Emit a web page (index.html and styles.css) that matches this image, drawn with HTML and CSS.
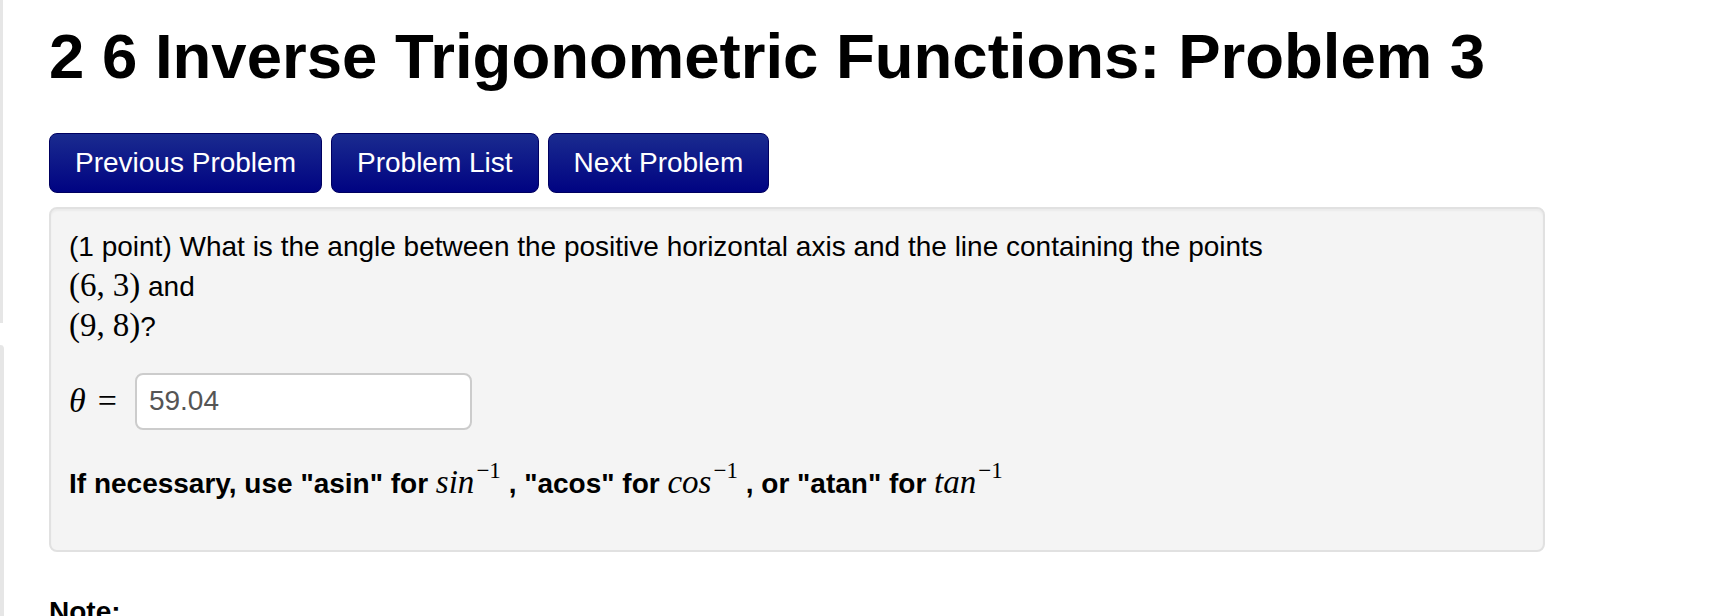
FILE: index.html
```html
<!DOCTYPE html>
<html lang="en">
<head>
  <meta charset="UTF-8">
  <title>2 6 Inverse Trigonometric Functions: Problem 3</title>
  <link rel="stylesheet" href="styles.css">
</head>
<body>

<div class="page">
  <aside class="edge">
    <div class="edge-top"></div>
    <div class="edge-bottom"></div>
  </aside>

  <main class="content">
    <h1>2 6 Inverse Trigonometric Functions: Problem 3</h1>

    <div class="nav-buttons">
      <a class="btn" href="#">Previous Problem</a>
      <a class="btn" href="#">Problem List</a>
      <a class="btn" href="#">Next Problem</a>
    </div>

    <div class="problem">
      <p class="question">
        (1 point) What is the angle between the positive horizontal axis and the line containing the points<br>
        <span class="math">(6,<span class="thin"></span>3)</span> and<br>
        <span class="math">(9,<span class="thin"></span>8)</span>?
      </p>

      <div class="answer-row">
        <span class="math theta"><i>θ</i><span class="eq">=</span></span>
        <input class="answer" type="text" value="59.04">
      </div>

      <p class="hint">
        If necessary, use "asin" for <span class="math"><i>sin</i><sup>−1</sup></span> ,
        "acos" for <span class="math"><i>cos</i><sup>−1</sup></span> ,
        or "atan" for <span class="math"><i>tan</i><sup>−1</sup></span>
      </p>
    </div>

    <h3 class="note">Note:</h3>
  </main>
</div>

</body>
</html>
```

FILE: styles.css
```css
html, body {
  overflow: hidden;
}

body {
  margin: 0;
  background: white;
  color: #000;
  font-family: "Liberation Sans", Arial, sans-serif;
  font-size: 28px;
  line-height: 40px;
}

.page {
  display: flex;
}

.edge {
  width: 4px;
  flex-shrink: 0;
}

.edge-top {
  height: 323px;
  border-left: 3px solid #e6e6e6;
}

.edge-bottom {
  margin-top: 22px;
  height: 400px;
  border-left: 3px solid #e6e6e6;
  border-top: 1px solid #e6e6e6;
  border-top-right-radius: 6px;
  border-right: 1px solid #e6e6e6;
}

.content {
  padding-left: 45px;
  flex: 1;
}

h1 {
  margin: 22px 0 41px;
  font-size: 63.5px;
  line-height: 1.1;
  font-weight: bold;
}

.nav-buttons {
  display: flex;
  gap: 9px;
}

.btn {
  display: block;
  padding: 0 25px;
  line-height: 58px;
  font-size: 28px;
  color: white;
  text-decoration: none;
  border: 1px solid #000060;
  border-radius: 8px;
  background: linear-gradient(#1a2b8f, #000382);
}

.problem {
  margin-top: 14px;
  width: 1496px;
  box-sizing: border-box;
  padding: 18px 18px 46px;
  background: #f4f4f4;
  border: 2px solid #e1e1e1;
  border-radius: 8px;
  box-shadow: inset 0 2px 2px rgba(0, 0, 0, 0.04);
}

.problem p {
  margin: 0;
}

.math {
  font-family: "Liberation Serif", "Times New Roman", serif;
  font-size: 33px;
  font-weight: normal;
  line-height: 1;
  white-space: nowrap;
}

.math i {
  font-style: italic;
}

.math sup {
  font-size: 23px;
  vertical-align: 15px;
  line-height: 0;
  margin-left: 2px;
}

.thin {
  display: inline-block;
  width: 8px;
}

.theta {
  font-size: 34px;
}

.eq {
  margin: 0 10px 0 12px;
}

.answer-row {
  display: flex;
  align-items: center;
  margin-top: 26px;
  height: 57px;
}

.answer {
  width: 337px;
  height: 57px;
  box-sizing: border-box;
  padding: 0 12px;
  margin-left: 8px;
  border: 2px solid #cccccc;
  border-radius: 8px;
  background: white;
  font-family: "Liberation Sans", Arial, sans-serif;
  font-size: 28px;
  color: #555;
}

.hint {
  margin-top: 34px !important;
  font-weight: bold;
}

.note {
  margin: 40px 0 0;
  font-size: 28px;
  font-weight: bold;
}
```
